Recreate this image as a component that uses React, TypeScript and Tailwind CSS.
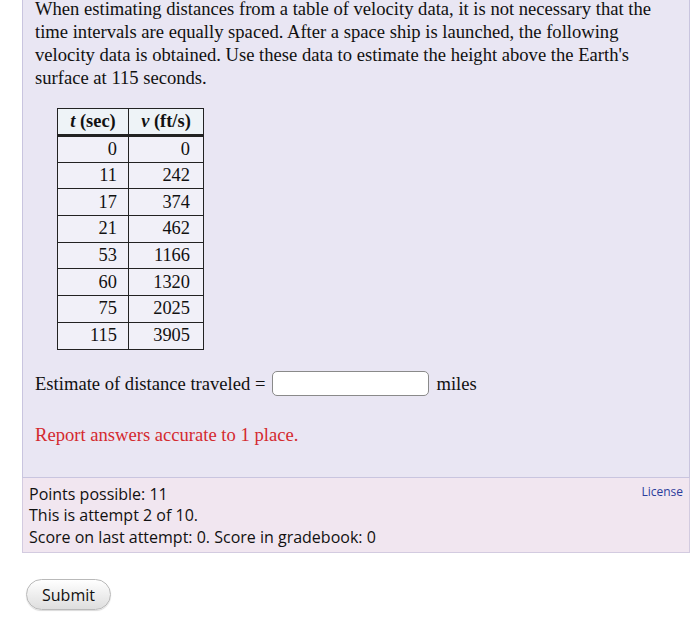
import { useState } from "react";

const rows: [number, number][] = [
  [0, 0],
  [11, 242],
  [17, 374],
  [21, 462],
  [53, 1166],
  [60, 1320],
  [75, 2025],
  [115, 3905],
];

export default function App() {
  const [answer, setAnswer] = useState("");

  return (
    <div className="min-h-[632px] bg-white">
      <div className="ml-[22px] mr-[10px]">
        <div className="border-x border-b border-[#c9c5df] bg-[#e9e6f3] pl-[12px] pr-[18px] pb-[31px] font-['Liberation_Serif',serif] text-[18.6px] leading-[23px] text-[#111]">
          <p className="-mt-[3px]">
            When estimating distances from a table of velocity data, it is not necessary that the time intervals are
            equally spaced. After a space ship is launched, the following velocity data is obtained. Use these data to
            estimate the height above the Earth's surface at 115 seconds.
          </p>

          <table className="mt-[19px] ml-[22px] border-collapse text-[18.4px]">
            <thead>
              <tr className="bg-[#eef3f7]">
                <th className="h-[27px] w-[71px] border border-b-[3px] border-[#222] px-1 text-center font-bold">
                  <i>t</i> (sec)
                </th>
                <th className="w-[75px] border border-b-[3px] border-[#222] px-1 text-center font-bold">
                  <i>v</i> (ft/s)
                </th>
              </tr>
            </thead>
            <tbody>
              {rows.map(([t, v]) => (
                <tr key={t} className="bg-[#f1f0f8]">
                  <td className="h-[26.7px] border border-[#222] pr-[11px] text-right">{t}</td>
                  <td className="border border-[#222] pr-[13px] text-right">{v}</td>
                </tr>
              ))}
            </tbody>
          </table>

          <div className="mt-[21px] flex items-center">
            <span>Estimate of distance traveled =</span>
            <input
              value={answer}
              onChange={(e) => setAnswer(e.target.value)}
              className="ml-[7px] h-[25px] w-[157px] rounded-[5px] border border-[#8a8a8a] bg-white px-1 outline-none"
            />
            <span className="ml-[7px]">miles</span>
          </div>

          <p className="mt-[27px] text-[#d42a2f]">Report answers accurate to 1 place.</p>
        </div>

        <div className="flex items-start justify-between border-x border-b border-[#d3cbe0] bg-[#f1e6f0] pl-[6px] pr-[6px] pt-[6px] pb-[4px] font-['Open_Sans',sans-serif] text-[16px] leading-[21.5px] text-[#111]">
          <div>
            <div>Points possible: 11</div>
            <div>This is attempt 2 of 10.</div>
            <div>Score on last attempt: 0. Score in gradebook: 0</div>
          </div>
          <a href="#" className="-mt-[3px] text-[12px] text-[#2b3d9c]">
            License
          </a>
        </div>

        <button
          type="button"
          className="mt-[26px] ml-[4px] h-[31px] w-[85px] rounded-full border border-[#b9b9b9] bg-gradient-to-b from-white to-[#dedede] font-['Open_Sans',sans-serif] text-[16px] text-[#111] shadow-[0_1px_1px_rgba(0,0,0,0.15)]"
        >
          Submit
        </button>
      </div>
    </div>
  );
}
